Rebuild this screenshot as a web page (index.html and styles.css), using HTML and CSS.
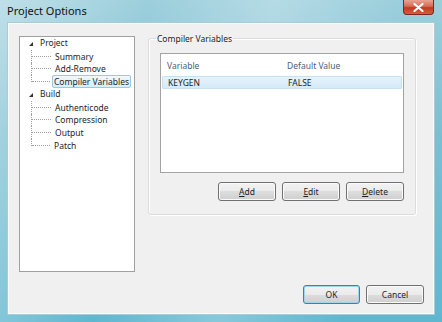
FILE: index.html
```html
<!DOCTYPE html>
<html lang="en">
<head>
  <meta charset="UTF-8">
  <title>Project Options</title>
  <link rel="stylesheet" href="styles.css">
</head>
<body>
  <div id="window">
    <div class="titlebar">
      <span class="title">Project Options</span>
      <div class="close">
        <svg width="11" height="9" viewBox="0 0 11 9">
          <path d="M1.5 1 L9.5 8 M9.5 1 L1.5 8" stroke="#fff" stroke-width="2.2" stroke-linecap="round"/>
        </svg>
      </div>
    </div>

    <div class="client">
      <div class="main">
        <ul class="tree">
          <li class="node">
            <div class="label"><span class="arrow"></span>Project</div>
            <ul class="kids">
              <li><span class="tick"></span><span class="text">Summary</span></li>
              <li><span class="tick"></span><span class="text">Add-Remove</span></li>
              <li class="last"><span class="tick"></span><span class="text sel">Compiler Variables</span></li>
            </ul>
          </li>
          <li class="node">
            <div class="label"><span class="arrow"></span>Build</div>
            <ul class="kids">
              <li><span class="tick"></span><span class="text">Authenticode</span></li>
              <li><span class="tick"></span><span class="text">Compression</span></li>
              <li><span class="tick"></span><span class="text">Output</span></li>
              <li class="last"><span class="tick"></span><span class="text">Patch</span></li>
            </ul>
          </li>
        </ul>

        <fieldset class="group">
          <legend>Compiler Variables</legend>
          <div class="list">
            <div class="row head">
              <span class="c1">Variable</span>
              <span class="c2">Default Value</span>
            </div>
            <div class="row selected">
              <span class="c1">KEYGEN</span>
              <span class="c2">FALSE</span>
            </div>
          </div>
          <div class="actions">
            <button class="btn"><u>A</u>dd</button>
            <button class="btn"><u>E</u>dit</button>
            <button class="btn"><u>D</u>elete</button>
          </div>
        </fieldset>
      </div>

      <div class="footer">
        <button class="btn default">OK</button>
        <button class="btn wide">Cancel</button>
      </div>
    </div>
  </div>
</body>
</html>
```

FILE: styles.css
```css
body {
  margin: 0;
  width: 442px;
  height: 322px;
  overflow: hidden;
  font-family: "Noto Sans", "DejaVu Sans", sans-serif;
  font-size: 8.5px;
  color: #1e1e1e;
}
#window {
  height: 322px;
  display: flex;
  flex-direction: column;
  background:
    linear-gradient(100deg, rgba(255,255,255,0.35) 0%, rgba(255,255,255,0) 30%, rgba(255,255,255,0.25) 55%, rgba(255,255,255,0) 80%),
    linear-gradient(180deg, #9ccfdc 0%, #7ebfd1 40%, #5fb7cf 100%);
}
.titlebar {
  height: 22px;
  display: flex;
  justify-content: space-between;
  align-items: flex-start;
  padding: 0 8px 0 7px;
}
.title {
  font-size: 11px;
  line-height: 22px;
  color: #111;
}
.close {
  width: 31px;
  height: 15px;
  border: 1px solid #7a2a1e;
  border-top: none;
  border-radius: 0 0 4px 4px;
  background: linear-gradient(180deg, #e8a493 0%, #d66b55 45%, #c3391f 55%, #d2603f 100%);
  display: flex;
  align-items: center;
  justify-content: center;
  box-sizing: border-box;
}
.client {
  flex: 1;
  margin: 0 7px 7px 7px;
  background: #f0f0f0;
  border: 1px solid #a9cbd6;
  box-shadow: inset 0 0 0 1px #f8fbfc;
  padding: 13px 10px 0 11px;
  display: flex;
  flex-direction: column;
}
.main {
  display: flex;
  align-items: flex-start;
}

/* tree */
.tree {
  list-style: none;
  margin: 0;
  padding: 0;
  width: 116px;
  height: 236px;
  box-sizing: border-box;
  background: #fff;
  border: 1px solid #a0a0a0;
}
.tree ul {
  list-style: none;
  margin: 0;
  padding: 0;
}
.label {
  height: 12.75px;
  line-height: 12.75px;
  display: flex;
  align-items: center;
  padding-left: 9px;
}
.arrow {
  width: 0;
  height: 0;
  border-left: 4px solid transparent;
  border-bottom: 4px solid #333;
  margin-right: 7px;
  margin-top: 1px;
}
.kids {
  margin-left: 11px !important;
}
.kids li {
  position: relative;
  height: 12.75px;
  line-height: 12.75px;
  display: flex;
  align-items: center;
  border-left: 1px dotted #a0a0a0;
}
.kids li.last {
  border-left: none;
}
.kids li.last::before {
  content: "";
  position: absolute;
  left: 0;
  top: 0;
  height: 7px;
  border-left: 1px dotted #a0a0a0;
}
.tick {
  width: 19px;
  border-top: 1px dotted #a0a0a0;
  margin-right: 2px;
}
.kids li.last .tick {
  margin-left: 1px;
  width: 18px;
}
.text {
  padding: 0 1px;
  border: 1px solid transparent;
  line-height: 11px;
}
.text.sel {
  background: linear-gradient(180deg, #f1f8fd, #d5effc);
  border-color: #99c9ea;
  border-radius: 2px;
}

/* group */
.group {
  margin: -3px 0 0 13px;
  padding: 9px 11px 13px 11px;
  width: 268px;
  box-sizing: border-box;
  border: 1px solid #dcdcdc;
  border-radius: 3px;
  box-shadow: inset 1px 1px 0 #fff, 1px 1px 0 #fff;
}
.group legend {
  padding: 0 1px;
  margin-left: -4px;
}
.list {
  height: 120px;
  box-sizing: border-box;
  background: #fff;
  border: 1px solid #a3a3a3;
  padding: 1px 1px;
}
.row {
  display: flex;
  height: 20px;
  align-items: center;
}
.row.head {
  height: 21px;
  color: #4c607a;
}
.row.selected {
  height: 11px;
  background: linear-gradient(180deg, #e6f3fb, #d3eaf8);
  border: 1px solid #c8e1f1;
  border-radius: 1px;
}
.c1 {
  width: 120px;
  padding-left: 5px;
}
.c2 {
  padding-left: 0;
}
.actions {
  display: flex;
  justify-content: flex-end;
  gap: 6px;
  margin-top: 9px;
}

/* buttons */
.btn {
  font-family: inherit;
  font-size: 8.5px;
  color: #1e1e1e;
  width: 58px;
  height: 19px;
  padding: 0;
  border: 1px solid #707070;
  border-radius: 3px;
  background: linear-gradient(180deg, #f2f2f2 0%, #ebebeb 50%, #dddddd 50%, #cfcfcf 100%);
  box-shadow: inset 0 0 0 1px #fbfbfb;
}
.btn u {
  text-decoration-thickness: 1px;
}
.btn.default {
  width: 57px;
  border-color: #3c7fb1;
  box-shadow: inset 0 0 0 1px #9ed6f0;
}
.footer {
  display: flex;
  justify-content: flex-end;
  gap: 6px;
  margin-top: 13px;
}
```
